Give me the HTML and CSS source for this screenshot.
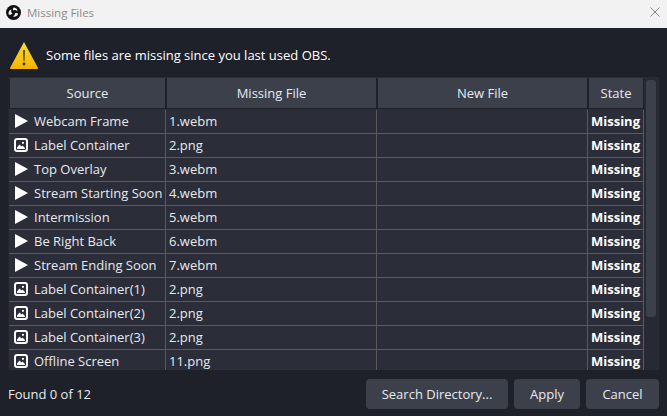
FILE: index.html
```html
<!DOCTYPE html>
<html lang="en">
<head>
<meta charset="utf-8">
<title>Missing Files</title>
<link rel="stylesheet" href="styles.css">
</head>
<body>
<svg class="defs" width="0" height="0">
  <symbol id="play" viewBox="0 0 14 14"><path d="M1 0 L14 7 L1 14 Z" fill="#fff"/></symbol>
  <symbol id="image" viewBox="0 0 14 14">
    <rect x="1" y="1" width="12" height="12" rx="2.2" fill="none" stroke="#fff" stroke-width="2"/>
    <path d="M3 11 L3 9.5 L5.5 6.5 L7.5 8.5 L8.5 7.5 L11 10 L11 11 Z" fill="#fff"/>
    <circle cx="9" cy="4.8" r="1.1" fill="#fff"/>
  </symbol>
</svg>
<div class="titlebar">
  <svg class="logo" width="15" height="15" viewBox="0 0 16 16">
    <circle cx="8" cy="8" r="8" fill="#111"/>
    <path d="M8.4 2.6 C11 2.8 12.6 4.8 12 6.8 C11 5.4 9.2 5 8 5.8 C7 4.8 7.3 3.2 8.4 2.6 Z M2.8 10.2 C2.2 7.4 3.6 5.2 5.8 4.8 C5 6.4 5.6 8.2 6.8 8.8 C6.6 10 4.4 11 2.8 10.2 Z M13 9.6 C11.8 12.2 9 13.2 7.2 12 C8.8 11.6 9.9 10 9.7 8.6 C11 8.2 12.4 8.6 13 9.6 Z" fill="#f0f0f0"/>
  </svg>
  <span class="title">Missing Files</span>
  <svg class="close" width="10" height="10" viewBox="0 0 10 10"><path d="M0.5 0.5 L9.5 9.5 M9.5 0.5 L0.5 9.5" stroke="#8a8a8a" stroke-width="1" fill="none"/></svg>
</div>
<main class="dialog">
  <div class="notice">
    <svg class="warn" width="28" height="28" viewBox="0 0 28 28">
      <defs><linearGradient id="wg" x1="0" y1="0" x2="0" y2="1"><stop offset="0" stop-color="#ffdc2e"/><stop offset="1" stop-color="#f5b400"/></linearGradient></defs>
      <path d="M14 1 L28 27 Q28 28 27 28 L1 28 Q0 28 0 27 Z" fill="url(#wg)"/>
      <path d="M13.2 9 H14.8 L14.5 20 H13.5 Z" fill="#3a2c00"/>
      <circle cx="14" cy="23" r="1.4" fill="#3a2c00"/>
    </svg>
    <span>Some files are missing since you last used OBS.</span>
  </div>
  <div class="frame">
    <div class="table">
      <div class="head">
        <div class="hcell">Source</div>
        <div class="hcell">Missing File</div>
        <div class="hcell">New File</div>
        <div class="hcell">State</div>
      </div>
      <div class="rows">
        <div class="row"><div class="cell src"><svg class="ico"><use href="#play"/></svg>Webcam Frame</div><div class="cell">1.webm</div><div class="cell"></div><div class="cell state">Missing</div></div>
        <div class="row"><div class="cell src"><svg class="ico"><use href="#image"/></svg>Label Container</div><div class="cell">2.png</div><div class="cell"></div><div class="cell state">Missing</div></div>
        <div class="row"><div class="cell src"><svg class="ico"><use href="#play"/></svg>Top Overlay</div><div class="cell">3.webm</div><div class="cell"></div><div class="cell state">Missing</div></div>
        <div class="row"><div class="cell src"><svg class="ico"><use href="#play"/></svg>Stream Starting Soon</div><div class="cell">4.webm</div><div class="cell"></div><div class="cell state">Missing</div></div>
        <div class="row"><div class="cell src"><svg class="ico"><use href="#play"/></svg>Intermission</div><div class="cell">5.webm</div><div class="cell"></div><div class="cell state">Missing</div></div>
        <div class="row"><div class="cell src"><svg class="ico"><use href="#play"/></svg>Be Right Back</div><div class="cell">6.webm</div><div class="cell"></div><div class="cell state">Missing</div></div>
        <div class="row"><div class="cell src"><svg class="ico"><use href="#play"/></svg>Stream Ending Soon</div><div class="cell">7.webm</div><div class="cell"></div><div class="cell state">Missing</div></div>
        <div class="row"><div class="cell src"><svg class="ico"><use href="#image"/></svg>Label Container(1)</div><div class="cell">2.png</div><div class="cell"></div><div class="cell state">Missing</div></div>
        <div class="row"><div class="cell src"><svg class="ico"><use href="#image"/></svg>Label Container(2)</div><div class="cell">2.png</div><div class="cell"></div><div class="cell state">Missing</div></div>
        <div class="row"><div class="cell src"><svg class="ico"><use href="#image"/></svg>Label Container(3)</div><div class="cell">2.png</div><div class="cell"></div><div class="cell state">Missing</div></div>
        <div class="row"><div class="cell src"><svg class="ico"><use href="#image"/></svg>Offline Screen</div><div class="cell">11.png</div><div class="cell"></div><div class="cell state">Missing</div></div>
      </div>
    </div>
    <div class="scrollbar"><div class="thumb"></div></div>
  </div>
  <div class="footer">
    <span class="found">Found 0 of 12</span>
    <div class="buttons">
      <button class="btn search">Search Directory...</button>
      <button class="btn apply">Apply</button>
      <button class="btn cancel">Cancel</button>
    </div>
  </div>
</main>
</body>
</html>
```
FILE: styles.css
```css
* { box-sizing: border-box; }
html, body { margin: 0; padding: 0; }
body {
  width: 667px;
  height: 416px;
  overflow: hidden;
  background: #1f212a;
  color: #fff;
  font-family: "Open Sans", "Liberation Sans", sans-serif;
  font-size: 13px;
}
.defs { display: block; height: 0; }
.titlebar {
  height: 28px;
  background: #f2f2f2;
  display: flex;
  align-items: center;
  padding: 0 7px 0 6px;
}
.logo { margin-right: 6px; margin-top: -3px; flex: none; }
.title { color: #8c8c8c; font-size: 11.5px; flex: 1; margin-top: -4px; }
.close { flex: none; margin-top: -4px; }
.dialog { display: flex; flex-direction: column; }
.notice {
  height: 49px;
  padding: 13px 0 8px 10px;
  display: flex;
  align-items: center;
  gap: 8px;
}
.warn { flex: none; }
.frame {
  margin-left: 8px;
  width: 651px;
  height: 293px;
  background: #2b2d38;
  border-top: 1px solid #292b35;
  border-left: 1px solid #23252e;
  border-right: 1px solid #272934;
  display: flex;
}
.table { width: 635px; flex: none; display: flex; flex-direction: column; min-height: 0; }
.head {
  display: grid;
  grid-template-columns: 157px 211px 211px 56px;
  height: 31px;
  background: #1f212a;
  padding: 0 0 0 1px;
  flex: none;
}
.hcell {
  background: #3c404b;
  margin-right: 2px;
  height: 30px;
  display: flex;
  align-items: center;
  justify-content: center;
  color: #e6eaf0;
}
.rows { flex: 1; overflow: hidden; padding-top: 1px; }
.row {
  display: grid;
  grid-template-columns: 157px 211px 211px 56px;
  height: 24px;
  border-bottom: 1px solid #5a5a5a;
  width: 636px;
}
.cell {
  display: flex;
  align-items: center;
  padding: 0 0 1px 3px;
  height: 23px;
  border-right: 1px solid #5a5a5a;
  white-space: nowrap;
  overflow: hidden;
  color: #e6eaf0;
}
.src { padding-left: 5px; }
.ico { width: 14px; height: 14px; margin-right: 6px; flex: none; }
.state { font-weight: 700; color: #fff; }
.scrollbar {
  flex: 1;
  background: #272934;
  padding: 2px 2px 0 2px;
}
.thumb { height: 237px; background: #3c404b; border-radius: 3px; }
.footer {
  height: 46px;
  display: flex;
  align-items: center;
  justify-content: space-between;
  padding: 2px 8px 0 8px;
}
.found { color: #e6eaf0; }
.buttons { display: flex; gap: 6px; }
.btn {
  height: 30px;
  border: 0;
  border-radius: 4px;
  background: #3c404b;
  color: #e6eaf0;
  font: inherit;
  padding: 0;
}
.search { width: 142px; }
.apply { width: 66px; }
.cancel { width: 73px; }
```
